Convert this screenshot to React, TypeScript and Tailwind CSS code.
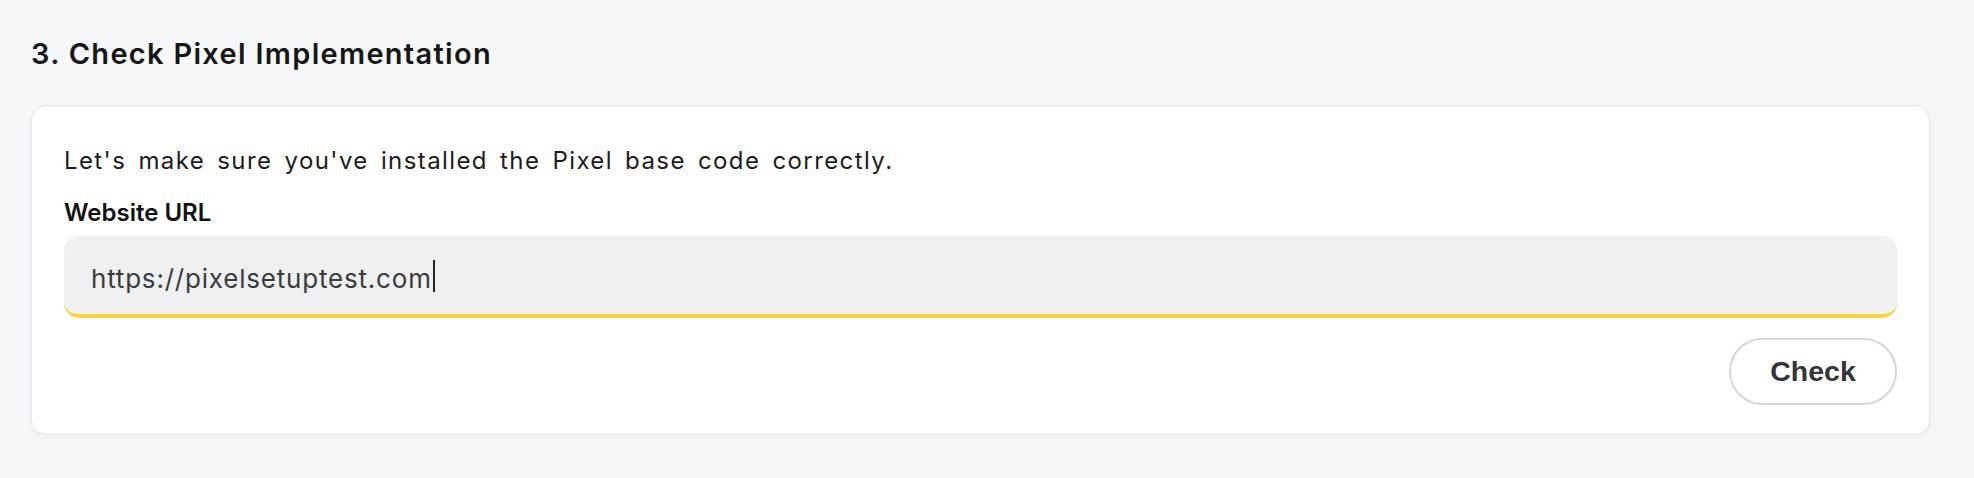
export default function App() {
  return (
    <div
      className="min-h-[478px] w-full bg-[#f6f7f9] pt-[36px] pb-[43px] pl-[31px] pr-[44px]"
      style={{ fontFamily: "Inter, 'Noto Sans', sans-serif" }}
    >
      <h2 className="text-[29px] leading-[36px] font-semibold text-[#161616] tracking-[1.3px]">
        3. Check Pixel Implementation
      </h2>

      {/* Pixel check card */}
      <div className="mt-[33px] rounded-[15px] border border-[#e6e7ea] bg-white px-[32px] pt-[41px] pb-[29px] shadow-[0_2px_6px_rgba(0,0,0,0.04)]">
        <p className="text-[24px] leading-[28px] text-[#1c1c1c] tracking-[1.4px] [word-spacing:4px]">
          Let's make sure you've installed the Pixel base code correctly.
        </p>

        <label className="mt-[26px] block text-[24px] leading-[24px] font-semibold text-[#111]">
          Website URL
        </label>

        <div className="mt-[11px] flex h-[82px] items-center rounded-[15px] border-b-4 border-[#f9d43c] bg-[#eff0f2] px-[27px]">
          <span className="text-[26px] text-[#3b3b3b] pt-[6px] tracking-[0.8px]">
            https://pixelsetuptest.com
          </span>
          <span className="ml-[1px] mt-[1px] h-[32px] w-[2px] bg-[#222]" />
        </div>

        <div className="mt-[20px] flex justify-end">
          <button
            className="h-[67px] w-[168px] rounded-full border-2 border-[#d6d6d6] bg-white text-[28.5px] font-bold text-[#333538]"
            style={{ fontFamily: "'Liberation Sans', Arial, sans-serif" }}
          >
            Check
          </button>
        </div>
      </div>
    </div>
  );
}
